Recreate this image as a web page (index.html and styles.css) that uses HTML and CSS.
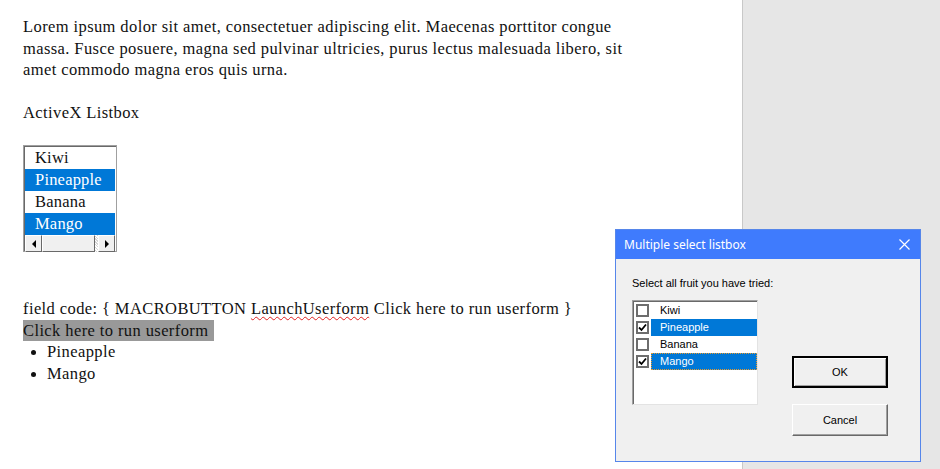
FILE: index.html
```html
<!DOCTYPE html>
<html>
  <head>
    <meta charset="UTF-8" />
    <title>Multiple select listbox</title>
    <link rel="stylesheet" href="styles.css">
  </head>
  <body>
    <div class="page">
      <p class="para">Lorem ipsum dolor sit amet, consectetuer adipiscing elit. Maecenas porttitor congue massa. Fusce posuere, magna sed pulvinar ultricies, purus lectus malesuada libero, sit amet commodo magna eros quis urna.</p>
      <p class="para">ActiveX Listbox</p>
      <div class="ax-list">
        <div class="ax-item">Kiwi</div>
        <div class="ax-item selected">Pineapple</div>
        <div class="ax-item">Banana</div>
        <div class="ax-item selected">Mango</div>
        <div class="ax-scroll">
          <div class="ax-btn"><span class="arrow left"></span></div>
          <div class="ax-thumb"></div>
          <div class="ax-track"></div>
          <div class="ax-btn"><span class="arrow right"></span></div>
        </div>
      </div>
      <p class="field">field code: { MACROBUTTON <span class="spell">LaunchUserform</span> Click here to run userform }</p>
      <p><span class="macro">Click here to run userform</span></p>
      <ul class="bullets">
        <li>Pineapple</li>
        <li>Mango</li>
      </ul>
    </div>

    <div class="dialog">
      <div class="titlebar">
        <span class="title">Multiple select listbox</span>
        <svg class="close" width="11" height="11" viewBox="0 0 11 11">
          <path d="M0.5 0.5 L10.5 10.5 M10.5 0.5 L0.5 10.5" stroke="#fff" stroke-width="1.2" fill="none" />
        </svg>
      </div>
      <div class="dlg-body">
        <div class="prompt">Select all fruit you have tried:</div>
        <div class="dlg-row">
          <div class="check-list">
            <div class="check-item">
              <span class="box"></span><span class="label">Kiwi</span>
            </div>
            <div class="check-item">
              <span class="box"><svg width="9" height="9" viewBox="0 0 9 9"><path d="M1 4.5 L3.5 7 L8 1.5" stroke="#000" stroke-width="1.8" fill="none" /></svg></span><span class="label selected">Pineapple</span>
            </div>
            <div class="check-item">
              <span class="box"></span><span class="label">Banana</span>
            </div>
            <div class="check-item">
              <span class="box"><svg width="9" height="9" viewBox="0 0 9 9"><path d="M1 4.5 L3.5 7 L8 1.5" stroke="#000" stroke-width="1.8" fill="none" /></svg></span><span class="label selected focus">Mango</span>
            </div>
          </div>
          <div class="buttons">
            <button class="btn default">OK</button>
            <button class="btn">Cancel</button>
          </div>
        </div>
      </div>
    </div>
  </body>
</html>
```

FILE: styles.css
```css
* {
  box-sizing: border-box;
}

body {
  margin: 0;
  background-color: #e6e6e6;
  height: 469px;
  overflow: hidden;
}

.page {
  width: 743px;
  height: 469px;
  background-color: #fff;
  border-right: 1px solid #c8c8c8;
  padding: 16px 0 0 23px;
  font-family: "Liberation Serif", serif;
  font-size: 16.5px;
  letter-spacing: 0.4px;
  line-height: 21.5px;
  color: #111;
}

.page p {
  margin: 0;
}

.para {
  width: 630px;
  margin-bottom: 21.5px !important;
}

.ax-list {
  width: 94px;
  height: 107px;
  border: 1px solid #a0a0a0;
  box-shadow: inset 1px 1px 0 #696969;
  padding: 1px 1px 0 1px;
  background-color: #fff;
  line-height: 22px;
  letter-spacing: 0.2px;
}

.ax-item {
  height: 22px;
  padding-left: 10px;
  white-space: nowrap;
}

.ax-item.selected {
  background-color: #0078d7;
  color: #fff;
}

.ax-scroll {
  display: flex;
  height: 17px;
  background-color: #f0f0f0;
}

.ax-btn {
  width: 17px;
  display: flex;
  align-items: center;
  justify-content: center;
  border: 1px solid;
  border-color: #fff #696969 #696969 #fff;
  background-color: #f0f0f0;
}

.ax-thumb {
  flex: 1;
  border: 1px solid;
  border-color: #fff #696969 #696969 #fff;
  background-color: #f0f0f0;
}

.ax-track {
  width: 3px;
  background-image: repeating-linear-gradient(45deg, #fff 0 1px, #d4d4d4 1px 2px);
}

.arrow {
  width: 0;
  height: 0;
  border-top: 4px solid transparent;
  border-bottom: 4px solid transparent;
}

.arrow.left {
  border-right: 4px solid #000;
}

.arrow.right {
  border-left: 4px solid #000;
}

.field {
  margin-top: 46px !important;
}

.spell {
  text-decoration: underline wavy #e02020;
  text-decoration-thickness: 1px;
  text-underline-offset: 2px;
}

.macro {
  background-color: #999;
  padding: 1px 6px 1px 0;
}

.bullets {
  margin: 0;
  padding-left: 24px;
  list-style: none;
}

.bullets li {
  position: relative;
}

.bullets li::before {
  content: "";
  position: absolute;
  left: -16px;
  top: 9px;
  width: 5px;
  height: 5px;
  border-radius: 50%;
  background-color: #111;
}

/* userform window */

.dialog {
  position: absolute;
  left: 615px;
  top: 229px;
  width: 306px;
  height: 233px;
  border: 1px solid #5686ea;
  background-color: #f0f0f0;
  font-family: "Liberation Sans", Arial, sans-serif;
  font-size: 11px;
  color: #000;
}

.titlebar {
  height: 29px;
  background-color: #3f7bfd;
  display: flex;
  align-items: center;
  justify-content: space-between;
  padding: 0 10px 0 8px;
}

.title {
  font-family: "Noto Sans", sans-serif;
  font-size: 12px;
  color: #fff;
}

.dlg-body {
  padding: 18px 0 0 16px;
}

.prompt {
  line-height: 13px;
}

.dlg-row {
  display: flex;
  gap: 34px;
  margin-top: 10px;
}

.check-list {
  width: 126px;
  height: 105px;
  background-color: #fff;
  border: 1px solid;
  border-color: #a0a0a0 #e3e3e3 #e3e3e3 #a0a0a0;
  box-shadow: inset 1px 1px 0 #696969;
  padding: 1px 0 0 3px;
}

.check-item {
  display: flex;
  align-items: center;
  height: 17px;
}

.box {
  width: 13px;
  height: 13px;
  border: 2px solid #6d6d6d;
  background-color: #fff;
  display: flex;
  align-items: center;
  justify-content: center;
  margin-right: 2px;
}

.label {
  flex: 1;
  height: 17px;
  line-height: 17px;
  padding-left: 9px;
}

.label.selected {
  background-color: #0078d7;
  color: #fff;
}

.label.focus {
  outline: 1px dotted #e89a2c;
  outline-offset: -1px;
}

.buttons {
  display: flex;
  flex-direction: column;
  gap: 16px;
  padding-top: 56px;
}

.btn {
  width: 96px;
  height: 32px;
  font-family: "Liberation Sans", Arial, sans-serif;
  font-size: 11px;
  color: #000;
  background-color: #f0f0f0;
  border: 1px solid;
  border-color: #fff #696969 #696969 #fff;
  box-shadow: inset -1px -1px 0 #a0a0a0;
  padding: 0;
}

.btn.default {
  outline: 1px solid #000;
  outline-offset: -1px;
  border-width: 2px;
  border-color: #000;
  box-shadow: inset 1px 1px 0 #fff, inset -1px -1px 0 #a0a0a0;
}
```
